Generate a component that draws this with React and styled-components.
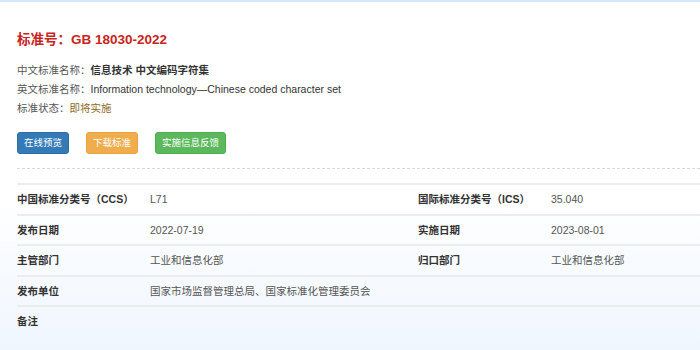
import React from "react";
import styled, { createGlobalStyle } from "styled-components";

const Global = createGlobalStyle`
  html, body { margin: 0; padding: 0; }
  body {
    width: 700px;
    height: 350px;
    overflow: hidden;
    font-family: "Liberation Sans", "Noto Sans CJK SC", sans-serif;
    background: linear-gradient(to bottom, #ffffff 0%, #ffffff 55%, #eff6fe 100%);
  }
`;

const Page = styled.div`
  border-top: 2px solid #d3e9fb;
  padding: 29px 0 0 17px;
`;

const Title = styled.h1`
  margin: 0;
  font-size: 13.5px;
  line-height: 18px;
  font-weight: bold;
  color: #c9241e;
`;

const InfoList = styled.div`
  margin-top: 12px;
  display: flex;
  flex-direction: column;
`;

const InfoLine = styled.div`
  font-size: 10.5px;
  line-height: 19px;
  color: #555;
`;

const InfoValue = styled.span`
  color: ${(p) => p.$color || "#333"};
  font-weight: ${(p) => (p.$bold ? "bold" : "normal")};
`;

const ButtonRow = styled.div`
  margin-top: 14px;
  display: flex;
  gap: 17px;
`;

const Button = styled.button`
  height: 22px;
  padding: 0 6px;
  border: 1px solid ${(p) => p.$border};
  border-radius: 3px;
  background: ${(p) => p.$bg};
  color: #fff;
  font-family: inherit;
  font-size: 9.5px;
  line-height: 20px;
  cursor: pointer;
`;

const Divider = styled.div`
  margin-top: 14px;
  border-top: 1px dashed #d8d8d8;
`;

const Table = styled.div`
  margin-top: 14px;
  border-top: 2px solid #ececec;
  display: grid;
  grid-template-columns: 133px 268px 133px 1fr;
`;

const Row = styled.div`
  display: contents;
`;

const Cell = styled.div`
  height: 28.5px;
  line-height: 28px;
  font-size: 10.5px;
  border-bottom: 2px solid ${(p) => (p.$last ? "transparent" : "#ececec")};
  color: ${(p) => (p.$label ? "#333" : "#555")};
  font-weight: ${(p) => (p.$label ? "bold" : "normal")};
  white-space: nowrap;
  grid-column: ${(p) => (p.$span ? `span ${p.$span}` : "auto")};
`;

const rows = [
  [["中国标准分类号（CCS）", "L71"], ["国际标准分类号（ICS）", "35.040"]],
  [["发布日期", "2022-07-19"], ["实施日期", "2023-08-01"]],
  [["主管部门", "工业和信息化部"], ["归口部门", "工业和信息化部"]],
];

export default function App() {
  return (
    <>
      <Global />
      <Page>
        <Title>标准号：GB 18030-2022</Title>
        <InfoList>
          <InfoLine>
            中文标准名称：<InfoValue $bold>信息技术 中文编码字符集</InfoValue>
          </InfoLine>
          <InfoLine>
            英文标准名称：<InfoValue>Information technology—Chinese coded character set</InfoValue>
          </InfoLine>
          <InfoLine>
            标准状态：<InfoValue $color="#8b6a1f">即将实施</InfoValue>
          </InfoLine>
        </InfoList>
        <ButtonRow>
          <Button $bg="#337ab7" $border="#2e6da4">在线预览</Button>
          <Button $bg="#f0ad4e" $border="#eea236">下载标准</Button>
          <Button $bg="#5cb85c" $border="#4cae4c">实施信息反馈</Button>
        </ButtonRow>
        <Divider />
        <Table>
          {rows.map((r, i) => (
            <Row key={i}>
              {r.map(([l, v]) => (
                <React.Fragment key={l}>
                  <Cell $label>{l}</Cell>
                  <Cell>{v}</Cell>
                </React.Fragment>
              ))}
            </Row>
          ))}
          <Row>
            <Cell $label>发布单位</Cell>
            <Cell $span={3}>国家市场监督管理总局、国家标准化管理委员会</Cell>
          </Row>
          <Row>
            <Cell $label $last>备注</Cell>
            <Cell $span={3} $last></Cell>
          </Row>
        </Table>
      </Page>
    </>
  );
}
